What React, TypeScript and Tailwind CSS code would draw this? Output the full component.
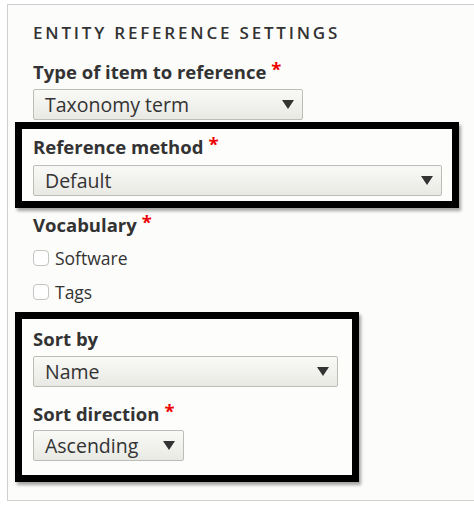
const font = { fontFamily: '"Open Sans", "Liberation Sans", sans-serif' };

function Req() {
  return <span className="ml-[5px] text-[#e00] relative -top-[3px]">*</span>;
}

function Select({ value, width }: { value: string; width: string }) {
  return (
    <div
      className={`${width} h-[31px] flex items-center justify-between pl-[11px] pr-[8px] border border-[#bdbdb8] rounded-[2px] bg-gradient-to-b from-[#f9f9f7] to-[#e9e9e4] text-[19.5px] leading-[26px] text-[#333]`}
    >
      <span>{value}</span>
      <svg width="12" height="9" viewBox="0 0 12 9">
        <path d="M0 0 L12 0 L6 9 Z" fill="#333" />
      </svg>
    </div>
  );
}

function Check({ label, className }: { label: string; className: string }) {
  return (
    <div className={`${className} flex items-center h-[24px] text-[17.5px] leading-[24px] text-[#333]`}>
      <span className="w-[16px] h-[16px] border border-[#c4c4c0] rounded-[4px] bg-white mr-[6px]" />
      {label}
    </div>
  );
}

export default function App() {
  return (
    <div className="w-[474px] h-[510px] bg-white overflow-hidden pt-[4px] pl-[7px]" style={font}>
      <div className="w-[480px] h-[497px] border border-r-0 border-[#cfcfcf] bg-[#fcfcfa] pl-[25px] pt-[17px] flex flex-col">
        <h2 className="h-[22px] text-[17px] leading-[22px] tracking-[2.8px] text-[#333] font-semibold">
          ENTITY REFERENCE SETTINGS
        </h2>
        <label className="mt-[16px] h-[24px] text-[18.5px] leading-[24px] font-bold text-[#333]">
          Type of item to reference
          <Req />
        </label>
        <div className="mt-[5px]">
          <Select value="Taxonomy term" width="w-[270px]" />
        </div>

        <div className="mt-[2px] -ml-[18px] w-[444px] border-[7px] border-black pl-[11px] pt-[6px] pb-[5px] shadow-[2px_3px_3px_rgba(0,0,0,0.35)] bg-[#fdfdfc]">
          <label className="block h-[24px] text-[18.5px] leading-[24px] font-bold text-[#333]">
            Reference method
            <Req />
          </label>
          <div className="mt-[6px]">
            <Select value="Default" width="w-[409px]" />
          </div>
        </div>

        <label className="mt-[5px] h-[24px] text-[18.5px] leading-[24px] font-bold text-[#333]">
          Vocabulary
          <Req />
        </label>
        <Check label="Software" className="mt-[9px]" />
        <Check label="Tags" className="mt-[10px]" />

        <div className="mt-[8px] -ml-[18px] w-[344px] border-[7px] border-black pl-[11px] pt-[8px] pb-[14px] shadow-[2px_3px_3px_rgba(0,0,0,0.35)] bg-[#fdfdfc]">
          <label className="block h-[24px] text-[18.5px] leading-[24px] font-bold text-[#333]">
            Sort by
          </label>
          <div className="mt-[5px]">
            <Select value="Name" width="w-[305px]" />
          </div>
          <label className="block mt-[15px] h-[24px] text-[18.5px] leading-[24px] font-bold text-[#333]">
            Sort direction
            <Req />
          </label>
          <div className="mt-[4px]">
            <Select value="Ascending" width="w-[151px]" />
          </div>
        </div>
      </div>
    </div>
  );
}
